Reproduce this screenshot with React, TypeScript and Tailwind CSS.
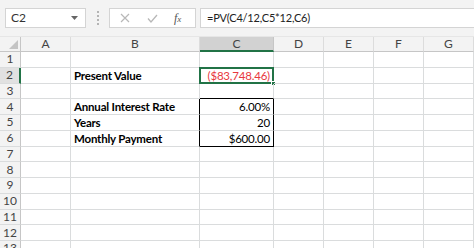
import React from 'react';

const COLS = ['A', 'B', 'C', 'D', 'E', 'F', 'G'];
const WIDTHS = ['w-[50px]', 'w-[129px]', 'w-[74px]', 'w-[50px]', 'w-[50px]', 'w-[50px]', 'w-[50px]'];

type Cell = { text?: string; bold?: boolean; right?: boolean; red?: boolean };

const DATA: Record<number, Record<string, Cell>> = {
  2: { B: { text: 'Present Value', bold: true }, C: { text: '($83,748.46)', right: true, red: true } },
  4: { B: { text: 'Annual Interest Rate', bold: true }, C: { text: '6.00%', right: true } },
  5: { B: { text: 'Years', bold: true }, C: { text: '20', right: true } },
  6: { B: { text: 'Monthly Payment', bold: true }, C: { text: '$600.00', right: true } },
};

function cellBorder(row: number, col: string) {
  // black box around C4:C6
  const boxed = row >= 4 && row <= 6;
  let cls = 'border-b border-r ';
  if ((col === 'B' || col === 'C') && boxed) cls += 'border-r-black ';
  else cls += 'border-r-[#dadcdd] ';
  if (col === 'C' && (row === 3 || row === 6)) cls += 'border-b-black';
  else cls += 'border-b-[#dadcdd]';
  return cls;
}

function Toolbar() {
  return (
    <div className="h-[37px] bg-[#f3f3f3] flex items-start pt-[8px] border-b border-[#e6e6e6]">
      <div className="ml-[5px] w-[81px] h-[20px] bg-white border border-[#d4d4d4] flex items-center justify-between pl-[5px] pr-[7px]">
        <span className="text-[12px] text-[#333]">C2</span>
        <svg width="7" height="4" viewBox="0 0 7 4">
          <path d="M0 0 L7 0 L3.5 4 Z" fill="#666" />
        </svg>
      </div>
      <div className="w-[23px] h-[20px] flex flex-col items-center justify-center gap-[2px]">
        <span className="w-[2px] h-[2px] bg-[#b4b4b4]" />
        <span className="w-[2px] h-[2px] bg-[#b4b4b4]" />
        <span className="w-[2px] h-[2px] bg-[#b4b4b4]" />
        <span className="w-[2px] h-[2px] bg-[#b4b4b4]" />
      </div>
      <div className="w-[87px] h-[20px] bg-white border border-[#d4d4d4] flex items-center">
        <svg className="ml-[10px]" width="10" height="10" viewBox="0 0 10 10">
          <path d="M1 1 L9 9 M9 1 L1 9" stroke="#b8b8b8" strokeWidth="1.2" />
        </svg>
        <svg className="ml-[17px]" width="11" height="9" viewBox="0 0 11 9">
          <path d="M1 4.5 L4 8 L10 1" stroke="#b8b8b8" strokeWidth="1.3" fill="none" />
        </svg>
        <span className="ml-[16px] text-[12px] italic font-['Liberation_Serif',serif] text-[#555]">
          f<span className="text-[9px]">x</span>
        </span>
      </div>
      <div className="ml-[4px] flex-1 h-[20px] bg-white border border-r-0 border-[#d4d4d4] flex items-center pl-[6px]">
        <span className="text-[11px] tracking-[-0.2px] text-[#222]">=PV(C4/12,C5*12,C6)</span>
      </div>
    </div>
  );
}

function HeaderRow() {
  return (
    <div className="flex h-[15px]">
      <div className="w-[21px] shrink-0 bg-[#f3f3f3] border-r border-b border-[#c6c6c6] relative">
        <svg className="absolute right-[2px] bottom-[2px]" width="9" height="9" viewBox="0 0 9 9">
          <path d="M9 0 L9 9 L0 9 Z" fill="#c4c4c4" />
        </svg>
      </div>
      {COLS.map((c, i) => {
        const sel = c === 'C';
        return (
          <div
            key={c}
            className={`${WIDTHS[i]} shrink-0 flex items-center justify-center text-[12px] text-[#444] ${
              sel
                ? 'bg-[#d2d2d2] border-b-2 border-b-[#217346] border-r border-r-[#c6c6c6]'
                : 'bg-[#f3f3f3] border-b border-b-[#c6c6c6] border-r border-r-[#dcdcdc]'
            }`}
          >
            {c}
          </div>
        );
      })}
    </div>
  );
}

function GridRow({ row }: { row: number }) {
  const cells = DATA[row] ?? {};
  const sel = row === 2;
  return (
    <div className="flex h-[15.75px]">
      <div
        className={`w-[21px] shrink-0 flex items-center justify-center text-[12px] text-[#444] border-b border-b-[#dadcdd] ${
          sel ? 'bg-[#e1e1e1] border-r-2 border-r-[#217346]' : 'bg-[#f3f3f3] border-r border-r-[#c6c6c6]'
        }`}
      >
        {row}
      </div>
      {COLS.map((c, i) => {
        const cell = cells[c];
        const selected = sel && c === 'C';
        return (
          <div
            key={c}
            className={`${WIDTHS[i]} shrink-0 relative flex items-center text-[11.5px] tracking-[-0.2px] ${cellBorder(row, c)} ${
              cell?.right ? 'justify-end pr-[3px]' : 'pl-[3px]'
            }`}
          >
            {cell?.text && (
              <span className={`${cell.bold ? 'font-bold' : ''} ${cell.red ? 'text-[#e8383d]' : 'text-black'} whitespace-nowrap`}>
                {cell.text}
              </span>
            )}
            {selected && (
              <>
                <div className="absolute -left-[1px] -top-[1px] -right-[1px] -bottom-[1px] border-2 border-[#217346]" />
                <div className="absolute -right-[3px] -bottom-[3px] w-[5px] h-[5px] bg-[#217346] border border-white" />
              </>
            )}
          </div>
        );
      })}
    </div>
  );
}

export default function App() {
  const rows = Array.from({ length: 13 }, (_, i) => i + 1);
  return (
    <div className="w-[474px] h-[248px] overflow-hidden bg-white font-['Lato',sans-serif]">
      <Toolbar />
      <HeaderRow />
      {rows.map((r) => (
        <GridRow key={r} row={r} />
      ))}
    </div>
  );
}
